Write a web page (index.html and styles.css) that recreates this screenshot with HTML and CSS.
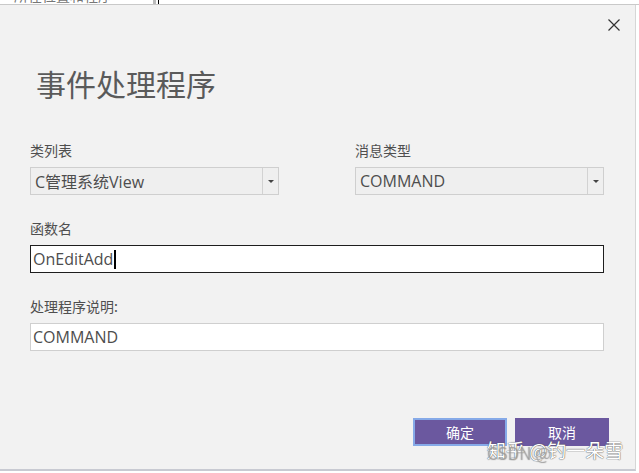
FILE: index.html
```html
<!DOCTYPE html>
<html lang="zh-CN">
<head>
  <meta charset="UTF-8">
  <meta name="viewport" content="width=device-width, initial-scale=1.0">
  <title>事件处理程序</title>
  <link rel="stylesheet" href="styles.css">
</head>
<body>
  <div class="topbar"><span class="topbar-text">所在位置和程序</span><span class="topbar-thumb"></span><span class="topbar-caret"></span></div>

  <div class="dialog">
    <div class="dialog-head">
      <button class="close" title="关闭">
        <svg width="12" height="12" viewBox="0 0 12 12"><path d="M0.5 0.5L11.5 11.5M11.5 0.5L0.5 11.5" stroke="#333" stroke-width="1.2" fill="none"/></svg>
      </button>
    </div>

    <h1 class="title">事件处理程序</h1>

    <div class="fields">
      <div class="row two">
        <div class="field">
          <label class="label">类列表</label>
          <div class="combo">
            <span class="combo-text">C管理系统View</span>
            <span class="combo-btn"><span class="arrow"></span></span>
          </div>
        </div>
        <div class="field">
          <label class="label">消息类型</label>
          <div class="combo">
            <span class="combo-text">COMMAND</span>
            <span class="combo-btn"><span class="arrow"></span></span>
          </div>
        </div>
      </div>

      <div class="field">
        <label class="label">函数名</label>
        <div class="input focused"><span>OnEditAdd</span><span class="caret"></span></div>
      </div>

      <div class="field">
        <label class="label">处理程序说明:</label>
        <div class="input">COMMAND</div>
      </div>
    </div>

    <div class="footer">
      <button class="btn default">确定</button>
      <button class="btn">取消</button>
    </div>

    <span class="watermark"><span class="wm-back">CSDN @</span>知乎 @钓一朵雪</span>
  </div>
</body>
</html>
```

FILE: styles.css
```css
body {
  margin: 0;
  width: 639px;
  height: 473px;
  background: #fff;
  font-family: "Open Sans", "Noto Sans CJK SC", sans-serif;
  overflow: hidden;
}

/* strip of the window behind the dialog */
.topbar {
  height: 4px;
  border-bottom: 1px solid #c9c9c9;
  overflow: hidden;
  position: relative;
  background: #fff;
}

.topbar-text {
  display: block;
  margin: -12px 0 0 14px;
  font-size: 14px;
  line-height: 16px;
  color: #777;
}

.topbar-thumb {
  position: absolute;
  left: 153px;
  top: 0;
  width: 3px;
  height: 4px;
  background: #bbb;
}

.topbar-caret {
  position: absolute;
  left: 158px;
  top: 0;
  width: 1px;
  height: 4px;
  background: #000;
}

.dialog {
  position: relative;
  width: 636px;
  height: 466px;
  box-sizing: border-box;
  background: #f2f2f2;
  border-right: 1px solid #d6d6d6;
  border-bottom: 2px solid #c8cad2;
  padding: 8px 31px 23px 30px;
  display: flex;
  flex-direction: column;
}

.dialog-head {
  display: flex;
  justify-content: flex-end;
  margin-right: -22px;
}

.close {
  width: 24px;
  height: 24px;
  border: none;
  background: none;
  padding: 0;
  display: flex;
  align-items: center;
  justify-content: center;
}

.title {
  margin: 26px 0 0 6px;
  font-family: "Noto Sans CJK SC", sans-serif;
  font-size: 30px;
  line-height: 40px;
  font-weight: 400;
  color: #5a5a5a;
}

.fields {
  margin-top: 37px;
  display: flex;
  flex-direction: column;
  gap: 23px;
}

.row.two {
  display: grid;
  grid-template-columns: 249px 249px;
  justify-content: space-between;
}

.field {
  display: flex;
  flex-direction: column;
}

.label {
  font-family: "Noto Sans CJK SC", sans-serif;
  font-size: 14px;
  line-height: 20px;
  color: #4f4f4f;
  margin-bottom: 7px;
}

.combo {
  height: 28px;
  box-sizing: border-box;
  border: 1px solid #cfcfcf;
  background: #efefef;
  display: flex;
  align-items: center;
}

.combo-text {
  flex: 1;
  padding-left: 4px;
  font-size: 16px;
  color: #4d4d4d;
}

.combo-btn {
  width: 15px;
  height: 100%;
  border-left: 1px solid #d2d2d2;
  display: flex;
  align-items: center;
  justify-content: center;
}

.arrow {
  width: 0;
  height: 0;
  border-left: 3px solid transparent;
  border-right: 3px solid transparent;
  border-top: 3px solid #444;
}

.input {
  height: 28px;
  box-sizing: border-box;
  border: 1px solid #cfcfcf;
  background: #fff;
  padding-left: 2px;
  display: flex;
  align-items: center;
  font-size: 16px;
  color: #4d4d4d;
}

.input.focused {
  border-color: #1e1e1e;
}

.caret {
  width: 2px;
  height: 19px;
  background: #000;
  margin-left: 1px;
}

.footer {
  margin-top: auto;
  margin-right: -5px;
  display: flex;
  justify-content: flex-end;
  gap: 8px;
}

.btn {
  width: 94px;
  height: 28px;
  box-sizing: border-box;
  border: 1px solid #6b589f;
  background: #6b589f;
  color: #fff;
  font-family: "Noto Sans CJK SC", sans-serif;
  font-size: 14px;
  padding: 0;
}

.btn.default {
  border: 2px solid #86aae8;
}

.watermark {
  position: absolute;
  left: 487px;
  top: 430px;
  font-family: "Noto Sans CJK SC", sans-serif;
  font-size: 19px;
  line-height: 30px;
  color: #fff;
  text-shadow: 0 0 1px #555, 0 0 1px #555;
  white-space: nowrap;
}

.wm-back {
  position: absolute;
  left: 0;
  top: 3px;
  font-size: 17px;
  color: transparent;
  text-shadow: 0 0 1px #999;
}
```
